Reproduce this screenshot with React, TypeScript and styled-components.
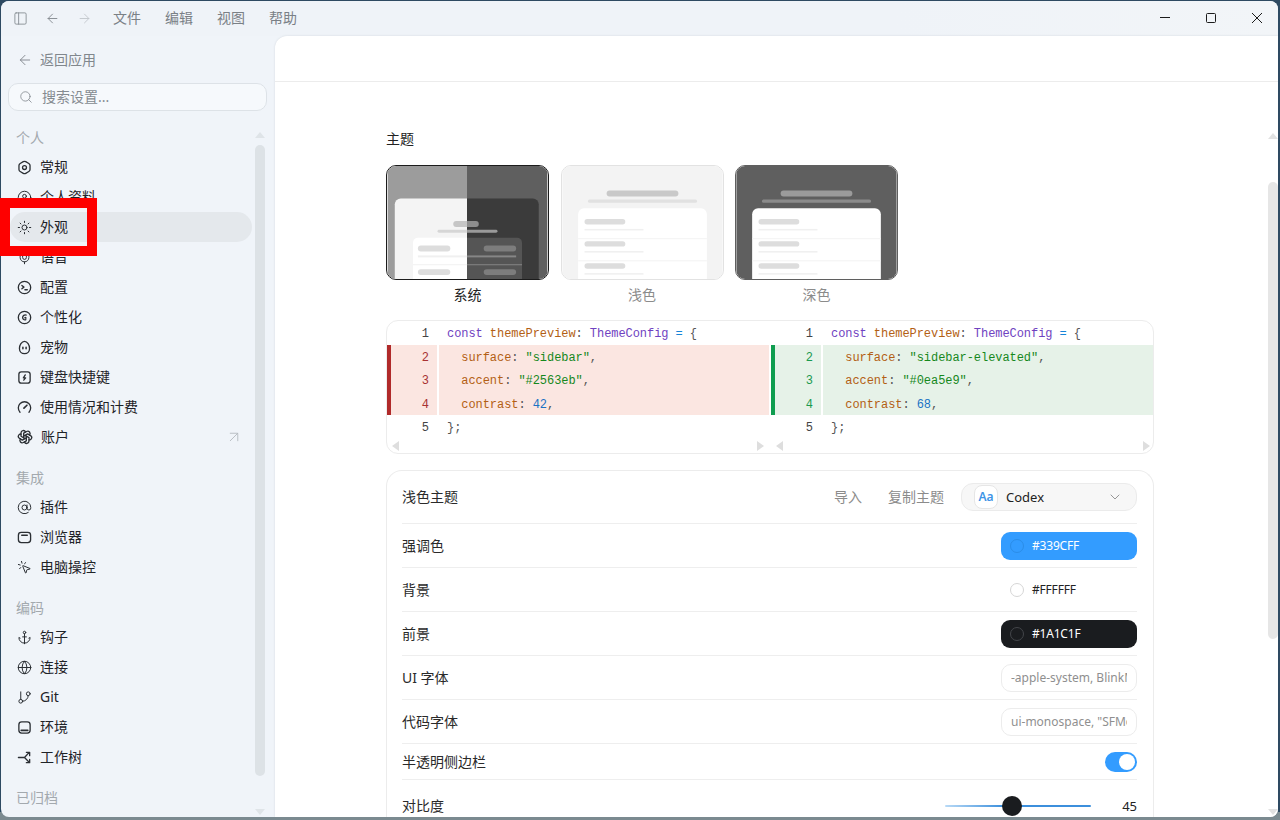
import React from "react";
import styled, { createGlobalStyle } from "styled-components";
import {
  Anchor,
  ArrowLeft,
  ArrowRight,
  ArrowUpRight,
  AtSign,
  ChevronDown,
  CircleUser,
  GitBranch,
  Globe,
  Mic,
  MousePointerClick,
  PanelLeft,
  Search,
  Sun,
} from "lucide-react";
import { TbBrandOpenai } from "react-icons/tb";

const GlobalStyle = createGlobalStyle`
  html, body {
    margin: 0;
    padding: 0;
    background: #2e4a62;
  }
  * {
    box-sizing: border-box;
  }
  body {
    font-family: "Noto Sans", "Noto Sans CJK SC", sans-serif;
    font-size: 14px;
    line-height: 20px;
    color: #1f2328;
  }
`;

const Desktop = styled.div`
  position: relative;
  width: 1280px;
  height: 820px;
  padding: 1px 2px 3px 1px;
  overflow: hidden;
  background: linear-gradient(#2e4a62 0 99%, #7b8a90 99%);
`;

const AppWindow = styled.div`
  display: flex;
  flex-direction: column;
  height: 100%;
  border-radius: 8px;
  overflow: hidden;
  background: #f0f4f9;
`;

const TitleBar = styled.header`
  display: flex;
  align-items: center;
  flex: 0 0 35px;
  padding: 0 0 1px 11px;
  background: linear-gradient(90deg, #eff3f8, #eff3f8 70%, #f2f5f8);
  color: #666d74;
`;

const IconButton = styled.span<{ $faded?: boolean }>`
  display: flex;
  align-items: center;
  justify-content: center;
  width: 16px;
  color: ${(p) => (p.$faded ? "#c3c8cd" : "#858b91")};
`;

const NavArrows = styled.div`
  display: flex;
  gap: 16px;
  margin-left: 16px;
`;

const Menu = styled.nav`
  display: flex;
  gap: 24px;
  margin-left: 21px;
  color: #7a8086;
`;

const WindowControls = styled.div`
  display: flex;
  align-items: center;
  gap: 36px;
  margin-left: auto;
  padding-right: 16px;
  color: #1c1c1c;
`;

const Body = styled.div`
  display: flex;
  flex: 1;
  min-height: 0;
`;

const Sidebar = styled.aside`
  display: flex;
  flex-direction: column;
  flex: 0 0 274px;
`;

const BackLink = styled.div`
  display: flex;
  align-items: center;
  gap: 7px;
  height: 24px;
  margin: 12px 0 0 16px;
  color: #81878d;
`;

const SearchBox = styled.div`
  display: flex;
  align-items: center;
  gap: 9px;
  width: 259px;
  height: 28px;
  margin: 11px 0 13px 7px;
  padding-left: 10px;
  border: 1px solid #dde2e7;
  border-radius: 10px;
  background: #f6f9fc;
  color: #858b91;
`;

const SideColumns = styled.div`
  display: flex;
  flex: 1;
  min-height: 0;
  padding-left: 9px;
`;

const NavList = styled.div`
  flex: 0 0 242px;
`;

const SectionLabel = styled.div<{ $first?: boolean }>`
  height: 28px;
  margin-top: ${(p) => (p.$first ? 0 : 12)}px;
  padding-left: 6px;
  line-height: 28px;
  color: #a3a9ae;
`;

const NavRow = styled.div<{ $active?: boolean }>`
  display: flex;
  align-items: center;
  gap: 8px;
  height: 30px;
  padding: 0 8px 0 7px;
  border-radius: 15px;
  background: ${(p) => (p.$active ? "#e4e8ec" : "transparent")};
`;

const NavIcon = styled.span`
  display: flex;
  flex: 0 0 15px;
  align-items: center;
  justify-content: center;
  color: #2b2f34;
`;

const Trailing = styled.span`
  display: flex;
  margin-left: auto;
  margin-right: 1px;
  color: #b4babf;
`;

const Rail = styled.div<{ $w: number; $ml?: number; $pt: number }>`
  display: flex;
  flex-direction: column;
  align-items: center;
  flex: 0 0 ${(p) => p.$w}px;
  margin-left: ${(p) => p.$ml ?? 0}px;
  padding: ${(p) => p.$pt}px 0 2px;
`;

const RailThumb = styled.div<{ $h: number; $mt: number; $color: string }>`
  flex: 0 0 ${(p) => p.$h}px;
  width: 10px;
  margin-top: ${(p) => p.$mt}px;
  border-radius: 5px;
  background: ${(p) => p.$color};
`;

const RailArrow = styled.div<{ $down?: boolean; $color: string }>`
  width: 0;
  height: 0;
  margin-top: ${(p) => (p.$down ? "auto" : "0")};
  border-left: 5px solid transparent;
  border-right: 5px solid transparent;
  border-${(p) => (p.$down ? "top" : "bottom")}: 6px solid ${(p) => p.$color};
`;

const Main = styled.main`
  display: flex;
  flex-direction: column;
  flex: 1;
  min-width: 0;
  border-top-left-radius: 12px;
  box-shadow: 0 0 2px rgba(120, 130, 140, 0.25);
  background: #fff;
  overflow: hidden;
`;

const MainTop = styled.div`
  flex: 0 0 46px;
  border-bottom: 1px solid #ececec;
`;

const MainColumns = styled.div`
  display: flex;
  flex: 1;
  min-height: 0;
`;

const Content = styled.div`
  flex: 1;
  min-width: 0;
  padding: 47px 114px 0 111px;
  overflow: hidden;
`;

const SectionTitle = styled.div`
  height: 20px;
  margin-bottom: 16px;
  color: #222;
`;

const ThemeChoices = styled.div`
  display: flex;
  gap: 11.5px;
  margin-bottom: 15px;
`;

const ThemeChoice = styled.div<{ $selected?: boolean }>`
  width: 163px;
  text-align: center;
  color: ${(p) => (p.$selected ? "#222" : "#8b8b8b")};
`;

const ThemeThumb = styled.div<{ $border: string }>`
  height: 115px;
  margin-bottom: 5px;
  border: 1px solid ${(p) => p.$border};
  border-radius: 10px;
  overflow: hidden;

  svg {
    display: block;
    width: 100%;
    height: 100%;
  }
`;

const DiffCard = styled.div`
  display: flex;
  height: 134px;
  margin-bottom: 16px;
  border: 1px solid #ececec;
  border-radius: 12px;
  overflow: hidden;
`;

const DiffPane = styled.div<{ $grow?: boolean }>`
  display: flex;
  flex-direction: column;
  flex: ${(p) => (p.$grow ? "1" : "0 0 384px")};
  min-width: 0;
`;

const DiffLine = styled.div`
  display: flex;
  height: 23.5px;
`;

const LINE_BG: Record<string, string> = { del: "#fbe6e1", add: "#e6f2e8", same: "transparent" };
const LINE_BAR: Record<string, string> = { del: "#b02a2a", add: "#0f9d4f", same: "transparent" };
const LINE_NUM: Record<string, string> = { del: "#a83232", add: "#1a9a50", same: "#444" };

const Gutter = styled.span<{ $type: string }>`
  flex: 0 0 50px;
  padding-right: 8px;
  border-left: 4px solid ${(p) => LINE_BAR[p.$type]};
  background: ${(p) => LINE_BG[p.$type]};
  text-align: right;
  font: 12px/26px "Liberation Mono", monospace;
  letter-spacing: -0.06px;
  color: ${(p) => LINE_NUM[p.$type]};
`;

const CodeText = styled.code<{ $type: string; $pad: number }>`
  flex: 1;
  margin: 0 ${(p) => p.$pad}px 0 2px;
  padding-left: 8px;
  background: ${(p) => LINE_BG[p.$type]};
  font: 12px/26px "Liberation Mono", monospace;
  letter-spacing: -0.06px;
  white-space: pre;
`;

const TOKEN_COLORS: Record<string, string> = {
  kw: "#6f42c1",
  name: "#b35f14",
  op: "#1585d8",
  str: "#16881c",
  num: "#1a72c4",
  punc: "#555",
};

const Token = styled.span<{ $kind: string }>`
  color: ${(p) => TOKEN_COLORS[p.$kind]};
`;

const DiffScroll = styled.div<{ $right: number }>`
  display: flex;
  align-items: center;
  justify-content: space-between;
  flex: 1;
  padding: 0 ${(p) => p.$right}px 0 5px;
`;

const SideArrow = styled.span<{ $right?: boolean }>`
  width: 0;
  height: 0;
  border-top: 5px solid transparent;
  border-bottom: 5px solid transparent;
  border-${(p) => (p.$right ? "left" : "right")}: 7px solid #dedede;
`;

const SettingsCard = styled.section`
  padding: 0 16px 0 15px;
  border: 1px solid #ececec;
  border-bottom: 0;
  border-radius: 16px 16px 0 0;
`;

const SettingRow = styled.div<{ $h: number; $last?: boolean }>`
  display: flex;
  align-items: center;
  justify-content: space-between;
  height: ${(p) => p.$h}px;
  border-bottom: ${(p) => (p.$last ? "0" : "1px solid #eeeeee")};
  color: #2a2a2a;
`;

const RowEnd = styled.div`
  display: flex;
  align-items: center;
`;

const GhostAction = styled.span`
  margin-right: 26px;
  color: #8b8b8b;
`;

const ThemeSelect = styled.div`
  display: flex;
  align-items: center;
  width: 176px;
  height: 28px;
  margin-left: -9px;
  padding: 0 13px 0 12px;
  border: 1px solid #ebebeb;
  border-radius: 12px;
  background: #f7f7f7;
  color: #222;
  font-size: 13px;
`;

const FontBadge = styled.span`
  display: flex;
  align-items: center;
  justify-content: center;
  width: 24px;
  height: 24px;
  margin-right: 8px;
  border: 1px solid #e6e6e6;
  border-radius: 8px;
  background: #fff;
  color: #3d94e6;
  font-size: 12px;
  font-weight: 600;
`;

const SelectChevron = styled.span`
  display: flex;
  margin-left: auto;
  color: #8f8f8f;
`;

const COLOR_FIELD: Record<string, { bg: string; fg: string; ring: string }> = {
  accent: { bg: "#339cff", fg: "#fff", ring: "#2b8de8" },
  background: { bg: "#fff", fg: "#222", ring: "#d6d6d6" },
  foreground: { bg: "#1a1c1f", fg: "#fff", ring: "#43464a" },
};

const ColorField = styled.div<{ $tone: string }>`
  display: flex;
  align-items: center;
  gap: 8px;
  width: 136px;
  height: 28px;
  padding-left: 9px;
  border-radius: 9px;
  background: ${(p) => COLOR_FIELD[p.$tone].bg};
  color: ${(p) => COLOR_FIELD[p.$tone].fg};
  font-size: 12px;
  letter-spacing: -0.2px;
`;

const ColorDot = styled.span<{ $tone: string }>`
  flex: 0 0 14px;
  height: 14px;
  border: 1px solid ${(p) => COLOR_FIELD[p.$tone].ring};
  border-radius: 50%;
  background: ${(p) => COLOR_FIELD[p.$tone].bg};
`;

const FontInput = styled.input`
  width: 136px;
  height: 28px;
  padding: 0 9px;
  border: 1px solid #ececec;
  border-radius: 10px;
  outline: none;
  background: #fff;
  font: 12px "Noto Sans", sans-serif;

  &::placeholder {
    color: #8f8f8f;
    opacity: 1;
  }
`;

const ToggleTrack = styled.div`
  display: flex;
  align-items: center;
  justify-content: flex-end;
  width: 32px;
  height: 20px;
  padding-right: 2px;
  border-radius: 10px;
  background: #339cff;
`;

const ToggleKnob = styled.span`
  width: 16px;
  height: 16px;
  border-radius: 50%;
  background: #fff;
`;

const SliderWrap = styled.div`
  display: flex;
  align-items: center;
  width: 192px;
`;

const SliderTrack = styled.div`
  position: relative;
  width: 146px;
  height: 2px;
  border-radius: 1px;
  background: linear-gradient(90deg, #b9daf6, #3c8fdc 40%, #3c8fdc);
`;

const SliderThumb = styled.span`
  position: absolute;
  top: -9px;
  left: 57px;
  width: 20px;
  height: 20px;
  border-radius: 50%;
  background: #1a1c1f;
`;

const SliderValue = styled.span`
  margin-left: auto;
  font-size: 13px;
  color: #222;
`;

const RedMark = styled.div`
  position: absolute;
  top: 198px;
  left: 0;
  width: 97px;
  height: 58px;
  border: 10px solid #fe0000;
`;

const glyph = {
  width: 15,
  height: 15,
  viewBox: "0 0 16 16",
  fill: "none",
  stroke: "currentColor",
  strokeWidth: 1.4,
  strokeLinecap: "round" as const,
  strokeLinejoin: "round" as const,
};

const chrome = {
  width: 10,
  height: 10,
  viewBox: "0 0 10 10",
  fill: "none",
  stroke: "currentColor",
  strokeWidth: 1,
};

const MinimizeGlyph = () => (
  <svg {...chrome}>
    <path d="M0 4.500h10" />
  </svg>
);
const MaximizeGlyph = () => (
  <svg {...chrome}>
    <rect x=".5" y=".5" width="9" height="9" rx="1" />
  </svg>
);
const CloseGlyph = () => (
  <svg {...chrome}>
    <path d="M0 0l10 10M10 0L0 10" />
  </svg>
);

const GearGlyph = () => (
  <svg {...glyph}>
    <path d="M6.700 1.800a2.600 2.600 0 0 1 2.600 0l3.300 1.900a2.600 2.600 0 0 1 1.300 2.200v4.200a2.600 2.600 0 0 1-1.300 2.200l-3.300 1.900a2.600 2.600 0 0 1-2.600 0l-3.300-1.900a2.600 2.600 0 0 1-1.300-2.200V5.900a2.600 2.600 0 0 1 1.300-2.200z" />
    <circle cx="8" cy="8" r="2.100" />
  </svg>
);
const ConfigGlyph = () => (
  <svg {...glyph}>
    <circle cx="8" cy="8" r="6.600" />
    <path d="M5.200 5.800L7.400 7.600 5.200 9.400M8.400 10.400h2.600" />
  </svg>
);
const PersonalGlyph = () => (
  <svg {...glyph}>
    <circle cx="8" cy="8" r="6.600" />
    <path d="M9.800 5.400C8 4.800 6 6 6 8c0 1.800 1.800 3 3.400 2.200M8.400 8.200c.5-.5 1.300-.1 1.100.6" />
  </svg>
);
const PetGlyph = () => (
  <svg {...glyph}>
    <path d="M8 1.500c3 0 5.400 4 5.400 7.500 0 3.300-2.400 5.500-5.400 5.500S2.600 12.300 2.600 9C2.600 5.500 5 1.500 8 1.500z" />
    <path d="M6.300 7.800v1.400M9.700 7.800v1.400" strokeWidth={1.600} />
  </svg>
);
const ShortcutGlyph = () => (
  <svg {...glyph}>
    <rect x="2" y="2" width="12" height="12" rx="2.600" />
    <path d="M8.800 5.200L6.800 8.400h2.400L7.200 10.800" />
  </svg>
);
const UsageGlyph = () => (
  <svg {...glyph}>
    <path d="M3.200 13A6.600 6.600 0 1 1 12.800 13" />
    <path d="M7.400 8.600L10.600 5.600" strokeWidth={1.800} />
  </svg>
);
const BrowserGlyph = () => (
  <svg {...glyph}>
    <rect x="1.500" y="2.500" width="13" height="11" rx="3" />
    <path d="M5 5.600h6" />
  </svg>
);
const EnvGlyph = () => (
  <svg {...glyph}>
    <rect x="2" y="2" width="12" height="12" rx="3" />
    <path d="M4.500 11h7" strokeWidth={1.800} />
  </svg>
);
const WorktreeGlyph = () => (
  <svg {...glyph}>
    <path d="M1.500 8h6.500l5-5.500M13.500 6V2.500H10M8 8l5 5M13.500 10v3.500H10" />
  </svg>
);

type NavItem = { label: string; icon: React.ReactNode; active?: boolean; external?: boolean };

const lucide = { size: 15, strokeWidth: 1.6 };

const personalItems: NavItem[] = [
  { label: "常规", icon: <GearGlyph /> },
  { label: "个人资料", icon: <CircleUser {...lucide} /> },
  { label: "外观", icon: <Sun {...lucide} />, active: true },
  { label: "语音", icon: <Mic {...lucide} /> },
  { label: "配置", icon: <ConfigGlyph /> },
  { label: "个性化", icon: <PersonalGlyph /> },
  { label: "宠物", icon: <PetGlyph /> },
  { label: "键盘快捷键", icon: <ShortcutGlyph /> },
  { label: "使用情况和计费", icon: <UsageGlyph /> },
  { label: "账户", icon: <TbBrandOpenai size={16} />, external: true },
];

const integrationItems: NavItem[] = [
  { label: "插件", icon: <AtSign {...lucide} /> },
  { label: "浏览器", icon: <BrowserGlyph /> },
  { label: "电脑操控", icon: <MousePointerClick {...lucide} /> },
];

const codingItems: NavItem[] = [
  { label: "钩子", icon: <Anchor {...lucide} /> },
  { label: "连接", icon: <Globe {...lucide} /> },
  { label: "Git", icon: <GitBranch {...lucide} /> },
  { label: "环境", icon: <EnvGlyph /> },
  { label: "工作树", icon: <WorktreeGlyph /> },
];

function NavRows({ items }: { items: NavItem[] }) {
  return (
    <>
      {items.map((item) => (
        <NavRow key={item.label} $active={item.active}>
          <NavIcon>{item.icon}</NavIcon>
          {item.label}
          {item.external && (
            <Trailing>
              <ArrowUpRight size={18} strokeWidth={1.2} />
            </Trailing>
          )}
        </NavRow>
      ))}
    </>
  );
}

type Tok = [string, string];
type CodeLine = { n: number; type: string; toks: Tok[] };

const firstLine: Tok[] = [
  ["kw", "const "],
  ["name", "themePreview"],
  ["punc", ": "],
  ["kw", "ThemeConfig "],
  ["op", "= "],
  ["punc", "{"],
];

const makeLines = (type: string, surface: string, accent: string, contrast: string): CodeLine[] => [
  { n: 1, type: "same", toks: firstLine },
  {
    n: 2,
    type,
    toks: [
      ["name", "  surface"],
      ["punc", ": "],
      ["str", `"${surface}"`],
      ["punc", ","],
    ],
  },
  {
    n: 3,
    type,
    toks: [
      ["name", "  accent"],
      ["punc", ": "],
      ["str", `"${accent}"`],
      ["punc", ","],
    ],
  },
  {
    n: 4,
    type,
    toks: [
      ["name", "  contrast"],
      ["punc", ": "],
      ["num", contrast],
      ["punc", ","],
    ],
  },
  { n: 5, type: "same", toks: [["punc", "};"]] },
];

function Pane({ lines, grow }: { lines: CodeLine[]; grow?: boolean }) {
  return (
    <DiffPane $grow={grow}>
      {lines.map((line) => (
        <DiffLine key={line.n}>
          <Gutter $type={line.type}>{line.n}</Gutter>
          <CodeText $type={line.type} $pad={grow ? 0 : 2}>
            {line.toks.map(([kind, text], i) => (
              <Token key={i} $kind={kind}>
                {text}
              </Token>
            ))}
          </CodeText>
        </DiffLine>
      ))}
      <DiffScroll $right={grow ? 3 : 7}>
        <SideArrow />
        <SideArrow $right />
      </DiffScroll>
    </DiffPane>
  );
}

type PreviewPalette = {
  back: string;
  panel: string;
  pill: string;
  sub: string;
  card: string;
  cardPill: string;
  cardLine: string;
};

const SystemLayer = ({ p }: { p: PreviewPalette }) => (
  <>
    <rect width="163" height="115" fill={p.back} />
    <rect x="7.500" y="33" width="146.500" height="90" rx="6" fill={p.panel} />
    <rect x="67" y="56" width="26" height="6" rx="3" fill={p.pill} />
    <rect x="51" y="65" width="61" height="3" rx="1.500" fill={p.sub} />
    <rect x="26" y="73" width="111" height="50" rx="5" fill={p.card} />
    <rect x="31" y="81" width="33" height="6" rx="3" fill={p.cardPill} />
    <rect x="98" y="81" width="33" height="6" rx="3" fill={p.cardPill} />
    <rect x="31" y="91" width="100" height="2" fill={p.cardLine} />
    <rect x="26" y="100" width="111" height="1" fill={p.cardLine} />
    <rect x="31" y="105" width="33" height="6" rx="3" fill={p.cardPill} />
    <rect x="98" y="105" width="33" height="6" rx="3" fill={p.cardPill} />
  </>
);

function SystemPreview() {
  return (
    <svg viewBox="0 0 163 115">
      <clipPath id="half-left">
        <rect width="81" height="115" />
      </clipPath>
      <clipPath id="half-right">
        <rect x="81" width="82" height="115" />
      </clipPath>
      <g clipPath="url(#half-left)">
        <SystemLayer
          p={{
            back: "#9c9c9c",
            panel: "#f4f4f4",
            pill: "#c6c6c6",
            sub: "#d6d6d6",
            card: "#ffffff",
            cardPill: "#dddddd",
            cardLine: "#f0f0f0",
          }}
        />
      </g>
      <g clipPath="url(#half-right)">
        <SystemLayer
          p={{
            back: "#5f5f5f",
            panel: "#3b3b3b",
            pill: "#8e8e8e",
            sub: "#9a9a9a",
            card: "#555555",
            cardPill: "#7d7d7d",
            cardLine: "#868686",
          }}
        />
      </g>
    </svg>
  );
}

function StackPreview({ back, pill, sub }: { back: string; pill: string; sub: string }) {
  return (
    <svg viewBox="0 0 163 115">
      <rect width="163" height="115" fill={back} />
      <rect x="45" y="25" width="73" height="6" rx="3" fill={pill} />
      <rect x="26" y="34" width="111" height="3.500" rx="1.700" fill={sub} />
      <rect x="16" y="43" width="131" height="90" rx="6" fill="#fff" />
      {[54, 76.5, 99].map((y) => (
        <g key={y}>
          <rect x="22.500" y={y} width="41.500" height="5.500" rx="2.700" fill="#dddddd" />
          <rect x="22.500" y={y + 10} width="60" height="1.600" fill="#f0f0f0" />
          <rect x="16" y={y + 19.500} width="131" height="1" fill="#f2f2f2" />
        </g>
      ))}
    </svg>
  );
}

export default function App() {
  return (
    <>
      <GlobalStyle />
      <Desktop>
        <AppWindow>
          <TitleBar>
            <IconButton>
              <PanelLeft size={15} strokeWidth={1.4} />
            </IconButton>
            <NavArrows>
              <IconButton>
                <ArrowLeft size={15} strokeWidth={1.5} />
              </IconButton>
              <IconButton $faded>
                <ArrowRight size={15} strokeWidth={1.5} />
              </IconButton>
            </NavArrows>
            <Menu>
              <span>文件</span>
              <span>编辑</span>
              <span>视图</span>
              <span>帮助</span>
            </Menu>
            <WindowControls>
              <MinimizeGlyph />
              <MaximizeGlyph />
              <CloseGlyph />
            </WindowControls>
          </TitleBar>
          <Body>
            <Sidebar>
              <BackLink>
                <ArrowLeft size={16} strokeWidth={1.4} />
                返回应用
              </BackLink>
              <SearchBox>
                <Search size={14} strokeWidth={1.4} />
                搜索设置...
              </SearchBox>
              <SideColumns>
                <NavList>
                  <SectionLabel $first>个人</SectionLabel>
                  <NavRows items={personalItems} />
                  <SectionLabel>集成</SectionLabel>
                  <NavRows items={integrationItems} />
                  <SectionLabel>编码</SectionLabel>
                  <NavRows items={codingItems} />
                  <SectionLabel>已归档</SectionLabel>
                </NavList>
                <Rail $w={10} $ml={3} $pt={8}>
                  <RailArrow $color="#dfe4e8" />
                  <RailThumb $h={631} $mt={7} $color="#dde2e6" />
                  <RailArrow $down $color="#dfe4e8" />
                </Rail>
              </SideColumns>
            </Sidebar>
            <Main>
              <MainTop />
              <MainColumns>
                <Content>
                  <SectionTitle>主题</SectionTitle>
                  <ThemeChoices>
                    <ThemeChoice $selected>
                      <ThemeThumb $border="#1c1c1c">
                        <SystemPreview />
                      </ThemeThumb>
                      系统
                    </ThemeChoice>
                    <ThemeChoice>
                      <ThemeThumb $border="#e2e2e2">
                        <StackPreview back="#f3f3f3" pill="#c9c9c9" sub="#e1e1e1" />
                      </ThemeThumb>
                      浅色
                    </ThemeChoice>
                    <ThemeChoice>
                      <ThemeThumb $border="#5f5f5f">
                        <StackPreview back="#5f5f5f" pill="#9b9b9b" sub="#8c8c8c" />
                      </ThemeThumb>
                      深色
                    </ThemeChoice>
                  </ThemeChoices>
                  <DiffCard>
                    <Pane lines={makeLines("del", "sidebar", "#2563eb", "42")} />
                    <Pane grow lines={makeLines("add", "sidebar-elevated", "#0ea5e9", "68")} />
                  </DiffCard>
                  <SettingsCard>
                    <SettingRow $h={53}>
                      浅色主题
                      <RowEnd>
                        <GhostAction>导入</GhostAction>
                        <GhostAction>复制主题</GhostAction>
                        <ThemeSelect>
                          <FontBadge>Aa</FontBadge>
                          Codex
                          <SelectChevron>
                            <ChevronDown size={16} strokeWidth={1.4} />
                          </SelectChevron>
                        </ThemeSelect>
                      </RowEnd>
                    </SettingRow>
                    <SettingRow $h={44}>
                      强调色
                      <ColorField $tone="accent">
                        <ColorDot $tone="accent" />
                        #339CFF
                      </ColorField>
                    </SettingRow>
                    <SettingRow $h={44}>
                      背景
                      <ColorField $tone="background">
                        <ColorDot $tone="background" />
                        #FFFFFF
                      </ColorField>
                    </SettingRow>
                    <SettingRow $h={44}>
                      前景
                      <ColorField $tone="foreground">
                        <ColorDot $tone="foreground" />
                        #1A1C1F
                      </ColorField>
                    </SettingRow>
                    <SettingRow $h={44}>
                      UI 字体
                      <FontInput readOnly placeholder="-apple-system, BlinkMacSystemFont" />
                    </SettingRow>
                    <SettingRow $h={44}>
                      代码字体
                      <FontInput readOnly placeholder={'ui-monospace, "SFMono-Regular"'} />
                    </SettingRow>
                    <SettingRow $h={36}>
                      半透明侧边栏
                      <ToggleTrack>
                        <ToggleKnob />
                      </ToggleTrack>
                    </SettingRow>
                    <SettingRow $h={52} $last>
                      对比度
                      <SliderWrap>
                        <SliderTrack>
                          <SliderThumb />
                        </SliderTrack>
                        <SliderValue>45</SliderValue>
                      </SliderWrap>
                    </SettingRow>
                  </SettingsCard>
                </Content>
                <Rail $w={10} $pt={51}>
                  <RailArrow $color="#e2e2e2" />
                  <RailThumb $h={457} $mt={43} $color="#e6e6e6" />
                  <RailArrow $down $color="#e2e2e2" />
                </Rail>
              </MainColumns>
            </Main>
          </Body>
        </AppWindow>
        <RedMark />
      </Desktop>
    </>
  );
}
